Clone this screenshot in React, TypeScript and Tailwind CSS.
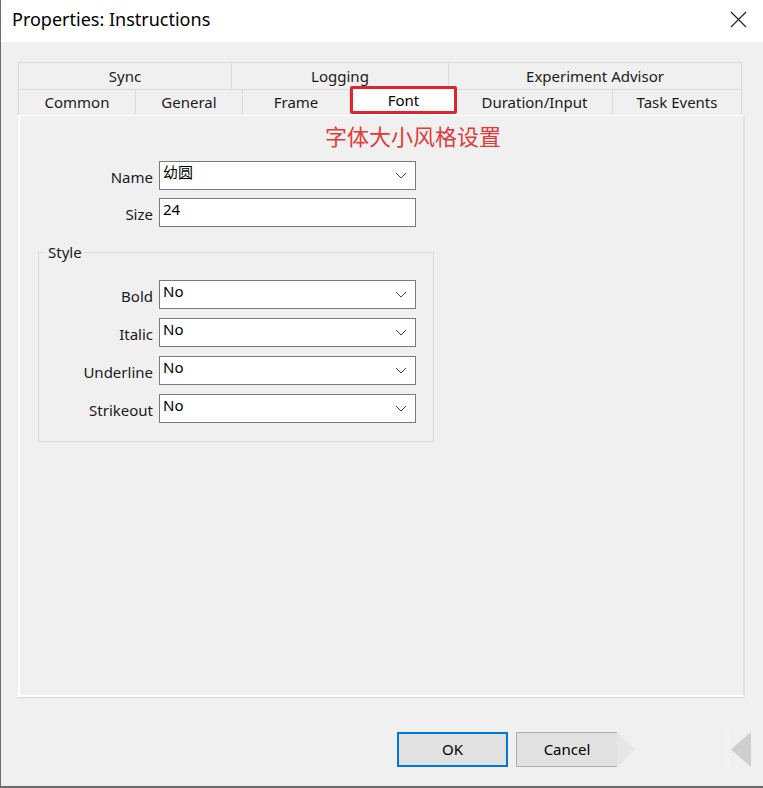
import React from "react";

const FONT = { fontFamily: '"Noto Sans", "Noto Sans CJK SC", sans-serif' };

const TOP_TABS = [
  { label: "Sync", w: "w-[214px]" },
  { label: "Logging", w: "w-[217px]" },
  { label: "Experiment Advisor", w: "w-[293px]" },
];

const BOTTOM_TABS = [
  { label: "Common", w: "w-[118px]" },
  { label: "General", w: "w-[107px]" },
  { label: "Frame", w: "w-[107px]" },
  { label: "Font", w: "w-[107px]", active: true },
  { label: "Duration/Input", w: "w-[156px]" },
  { label: "Task Events", w: "w-[129px]" },
];

function Chevron() {
  return (
    <svg width="12" height="7" viewBox="0 0 12 7" className="shrink-0">
      <path d="M1 1 L6 6 L11 1" fill="none" stroke="#444" strokeWidth="1" />
    </svg>
  );
}

function Field({
  label,
  value,
  select = true,
}: {
  label: string;
  value: string;
  select?: boolean;
}) {
  return (
    <div className="flex items-center">
      <div className="w-[120px] pr-[6px] pt-[4px] text-right text-[15px] text-[#1a1a1a]">
        {label}
      </div>
      <div className="flex h-[29px] w-[257px] items-center justify-between border border-[#7a7a7a] bg-white pl-[3px] pr-[8px]">
        <span className="-mt-[6px] text-[15px] leading-none text-black">{value}</span>
        {select && <Chevron />}
      </div>
    </div>
  );
}

export default function App() {
  return (
    <div
      className="flex h-[788px] w-[763px] flex-col border-l border-b-2 border-[#6b6b6b] bg-[#f0f0f0]"
      style={FONT}
    >
      {/* title bar */}
      <div className="flex h-[42px] shrink-0 items-center justify-between bg-white pl-[11px] pr-[16px]">
        <span className="-mt-[3px] text-[18px] text-black">Properties: Instructions</span>
        <svg width="17" height="17" viewBox="0 0 17 17" className="-mt-[4px]">
          <path d="M1 1 L16 16 M16 1 L1 16" stroke="#222" strokeWidth="1.2" />
        </svg>
      </div>

      {/* tabs */}
      <div className="flex flex-col pl-[17px] pt-[20px]">
        <div className="flex h-[27px]">
          {TOP_TABS.map((t, i) => (
            <div
              key={t.label}
              className={`${t.w} flex items-center justify-center border-t border-r border-[#d9d9d9] text-[15px] text-[#1a1a1a] ${
                i === 0 ? "border-l" : ""
              }`}
            >
              {t.label}
            </div>
          ))}
        </div>
        <div className="flex h-[26px]">
          {BOTTOM_TABS.map((t, i) =>
            t.active ? (
              <div
                key={t.label}
                className={`${t.w} relative flex items-center justify-center bg-white text-[15px] text-black`}
              >
                <span className="-mt-[4px]">{t.label}</span>
                <div className="absolute left-0 right-0 top-[-3px] bottom-[1px] rounded-[2px] border-[3px] border-[#e0242e]" />
              </div>
            ) : (
              <div
                key={t.label}
                className={`${t.w} flex items-center justify-center border-t border-r border-[#d9d9d9] text-[15px] text-[#1a1a1a] ${
                  i === 0 ? "border-l" : ""
                }`}
              >
                {t.label}
              </div>
            )
          )}
        </div>

        {/* panel */}
        <div className="flex h-[582px] w-[727px] flex-col border-l-2 border-t border-r-2 border-b-2 border-l-white border-t-white border-r-[#e2e2e2] border-b-white bg-[#f0f0f0] shadow-[0_1px_0_#d5d5d5]">
          <div
            className="ml-[305px] mt-[5px] text-[22px] leading-[28px] text-[#e23a3a]"
            style={{ fontFamily: '"Noto Sans CJK SC", sans-serif' }}
          >
            字体大小风格设置
          </div>

          <div className="ml-[19px] mt-[12px] flex flex-col gap-[8px]">
            <Field label="Name" value="幼圆" />
            <Field label="Size" value="24" select={false} />
          </div>

          <fieldset className="ml-[18px] mt-[16px] w-[396px] border border-[#dcdcdc] pb-[18px] pl-0">
            <legend className="ml-[7px] px-[2px] text-[15px] leading-[18px] text-[#1a1a1a]">
              Style
            </legend>
            <div className="mt-[19px] flex flex-col gap-[9px]">
              <Field label="Bold" value="No" />
              <Field label="Italic" value="No" />
              <Field label="Underline" value="No" />
              <Field label="Strikeout" value="No" />
            </div>
          </fieldset>
        </div>
      </div>

      {/* buttons */}
      <div className="mt-[35px] flex items-center pl-[396px]">
        <button className="flex h-[35px] w-[111px] items-center justify-center border-2 border-[#0078d7] bg-[#e1e1e1] text-[15px] text-black">
          OK
        </button>
        <div className="ml-[8px] flex h-[35px] items-center">
          <button className="flex h-[35px] w-[101px] items-center justify-center border border-r-0 border-[#adadad] bg-[#e1e1e1] text-[15px] text-black">
            Cancel
          </button>
          <svg width="18" height="35" viewBox="0 0 18 35">
            <polygon points="0,0 18,17.5 0,35" fill="#e6e6e6" />
          </svg>
        </div>
        <div className="ml-[90px] h-[35px] w-[4px] bg-[#f3f3f3]" />
        <svg width="22" height="35" viewBox="0 0 22 35">
          <polygon points="22,0 22,35 2,17.5" fill="#cecece" />
        </svg>
      </div>
    </div>
  );
}
